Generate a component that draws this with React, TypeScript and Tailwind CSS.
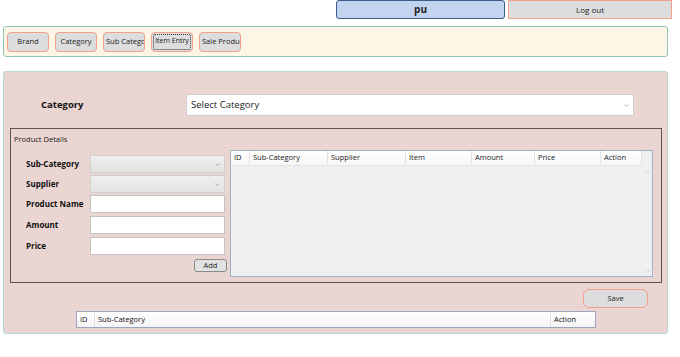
import React from "react";

const font = { fontFamily: '"Open Sans", "Noto Sans", sans-serif' };

function Chevron() {
  return (
    <svg width="5" height="3" viewBox="0 0 5 3" className="shrink-0">
      <path d="M0.5 0.5 L2.5 2.5 L4.5 0.5" fill="none" stroke="#9a9a9a" strokeWidth="0.8" />
    </svg>
  );
}

function NavButton({ label, focused }: { label: string; focused?: boolean }) {
  return (
    <div className="relative w-[42px] h-[20px] shrink-0 rounded-[4px] border border-[#f2a08c] bg-[#dddddd] overflow-hidden flex items-center justify-center">
      <span className={`whitespace-nowrap ${focused ? "text-[7px]" : "text-[7.5px]"} text-[#222]`}>{label}</span>
      {focused && (
        <div className="absolute inset-[1px] border border-dotted border-[#333] rounded-[2px]" />
      )}
    </div>
  );
}

function ClipButton({ label }: { label: string }) {
  return (
    <div className="w-[42px] h-[20px] shrink-0 rounded-[4px] border border-[#f2a08c] bg-[#dddddd] overflow-hidden flex items-center">
      <span className="whitespace-nowrap text-[7.5px] text-[#222] pl-[2px]">{label}</span>
    </div>
  );
}

function FieldLabel({ children }: { children: React.ReactNode }) {
  return (
    <div className="w-[64px] shrink-0 text-[8px] font-bold text-[#111] whitespace-nowrap">{children}</div>
  );
}

function GraySelect() {
  return (
    <div className="w-[135px] h-[18px] border border-[#d0d0d0] bg-gradient-to-b from-[#efefef] to-[#e3e3e3] flex items-center justify-end pr-[4px]">
      <Chevron />
    </div>
  );
}

function TextBox() {
  return <div className="w-[135px] h-[18px] border border-[#c4c4c4] bg-white" />;
}

const cols = [
  { name: "ID", w: "w-[19px]" },
  { name: "Sub-Category", w: "w-[78px]" },
  { name: "Supplier", w: "w-[78px]" },
  { name: "Item", w: "w-[66px]" },
  { name: "Amount", w: "w-[63px]" },
  { name: "Price", w: "w-[66px]" },
  { name: "Action", w: "w-[41px]" },
];

export default function App() {
  return (
    <div className="w-[680px] h-[357px] bg-white overflow-hidden text-[#111]" style={font}>
      {/* user bar */}
      <div className="flex ml-[336px] gap-[3px]">
        <div className="w-[169px] h-[19px] rounded-[3px] border border-[#3d5c8c] bg-[#c3d4f0] flex items-center justify-center text-[10px] font-bold text-[#222]">
          pu
        </div>
        <div className="w-[164px] h-[19px] border border-[#f2a08c] bg-[#dddddd] flex items-center justify-center text-[8px] text-[#222]">
          Log out
        </div>
      </div>

      {/* nav */}
      <div className="mt-[7px] ml-[3px] w-[665px] h-[31px] rounded-[3px] border border-[#93c6b6] bg-[#fdf5e6] flex items-center gap-[6px] pl-[3px]">
        <NavButton label="Brand" />
        <NavButton label="Category" />
        <ClipButton label="Sub Category" />
        <NavButton label="Item Entry" focused />
        <ClipButton label="Sale Product" />
      </div>

      {/* main panel */}
      <div className="mt-[14px] ml-[3px] w-[665px] h-[263px] rounded-[3px] border border-[#b4d8d2] bg-[#ead5d3] flex flex-col">
        <div className="flex items-center mt-[22px] h-[22px]">
          <div className="w-[182px] pl-[37px] text-[9.5px] font-bold">Category</div>
          <div className="w-[448px] h-[22px] bg-white border border-[#cfcfcf] flex items-center justify-between pl-[4px] pr-[4px]">
            <span className="text-[9.5px] text-[#222]">Select Category</span>
            <Chevron />
          </div>
        </div>

        {/* group box */}
        <div className="mt-[12px] ml-[6px] w-[652px] h-[155px] border border-[#5a5252] flex flex-col">
          <div className="h-[21px] pt-[5px] pl-[3px] text-[7.5px] text-[#222] leading-[10px]">Product Details</div>
          <div className="flex items-start">
            <div className="ml-[15px] pt-[5px] w-[201px] flex flex-col">
              <div className="flex items-center h-[18px]">
                <FieldLabel>Sub-Category</FieldLabel>
                <GraySelect />
              </div>
              <div className="flex items-center h-[18px] mt-[2px]">
                <FieldLabel>Supplier</FieldLabel>
                <GraySelect />
              </div>
              <div className="flex items-center h-[18px] mt-[2px]">
                <FieldLabel>Product Name</FieldLabel>
                <TextBox />
              </div>
              <div className="flex items-center h-[18px] mt-[3px]">
                <FieldLabel>Amount</FieldLabel>
                <TextBox />
              </div>
              <div className="flex items-center h-[18px] mt-[3px]">
                <FieldLabel>Price</FieldLabel>
                <TextBox />
              </div>
              <div className="flex justify-end mt-[4px]">
                <div className="w-[33px] h-[13px] rounded-[3px] border border-[#8a8a8a] bg-[#e2e2e2] flex items-center justify-center text-[7.5px] text-[#222]">
                  Add
                </div>
              </div>
            </div>

            {/* grid */}
            <div className="ml-[3px] w-[423px] h-[127px] border border-[#a3afc4] bg-[#f0f0f0] flex">
              <div className="flex flex-col">
                <div className="flex h-[15px] bg-gradient-to-b from-white to-[#f6f6f6] border-b border-[#e4e4e4]">
                  {cols.map((c) => (
                    <div
                      key={c.name}
                      className={`${c.w} border-r border-[#e2e2e2] pl-[3px] text-[7.5px] text-[#222] flex items-center whitespace-nowrap`}
                    >
                      {c.name}
                    </div>
                  ))}
                </div>
              </div>
              <div className="flex-1 flex flex-col items-center justify-between pt-[20px] pb-[3px]">
                <svg width="5" height="3" viewBox="0 0 5 3">
                  <path d="M0.5 2.5 L2.5 0.5 L4.5 2.5" fill="none" stroke="#c8c8c8" strokeWidth="0.8" />
                </svg>
                <svg width="5" height="3" viewBox="0 0 5 3">
                  <path d="M0.5 0.5 L2.5 2.5 L4.5 0.5" fill="none" stroke="#c8c8c8" strokeWidth="0.8" />
                </svg>
              </div>
            </div>
          </div>
        </div>

        <div className="mt-[6px] ml-[579px] w-[65px] h-[19px] rounded-[6px] border border-[#f2a08c] bg-[#dddddd] flex items-center justify-center text-[7.5px] text-[#222]">
          Save
        </div>

        <div className="mt-[3px] ml-[72px] w-[520px] h-[17px] border border-[#9aa6bb] bg-gradient-to-b from-white to-[#f4f4f4] flex">
          <div className="w-[18px] border-r border-[#e2e2e2] pl-[3px] text-[7.5px] flex items-center">ID</div>
          <div className="w-[456px] border-r border-[#e2e2e2] pl-[3px] text-[7.5px] flex items-center">Sub-Category</div>
          <div className="w-[44px] pl-[3px] text-[7.5px] flex items-center">Action</div>
        </div>
      </div>
    </div>
  );
}
